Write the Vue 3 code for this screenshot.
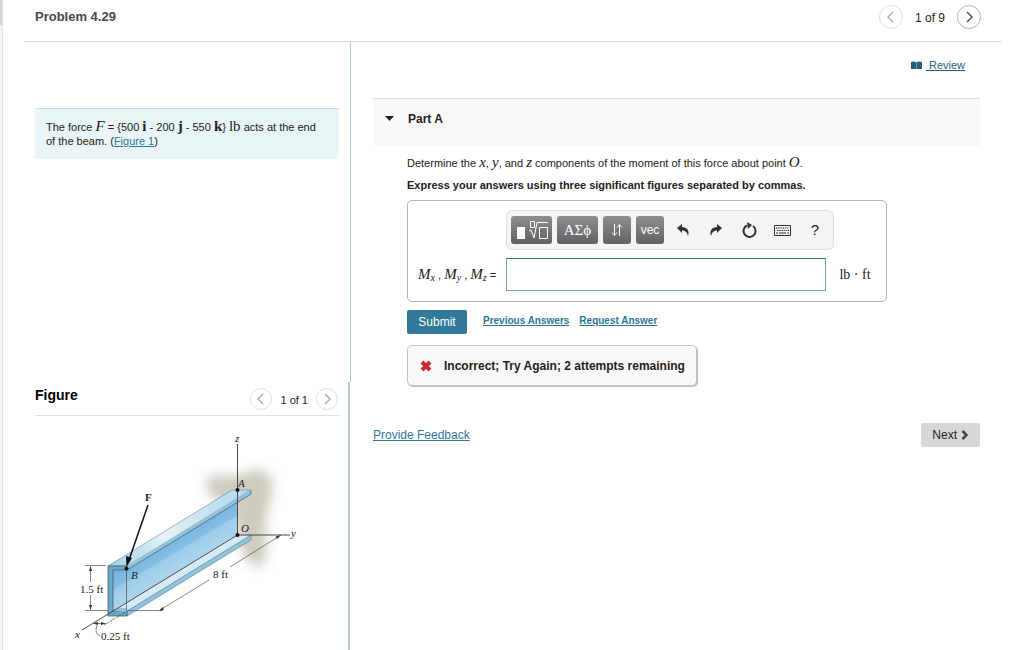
<template>
  <div class="page">
    <div class="edge"></div>
    <div class="shell">
      <header class="top-bar">
        <h1 class="problem-title">Problem 4.29</h1>
        <nav class="pager" aria-label="Problems">
          <button class="pager-button" type="button" aria-label="Previous problem" disabled>
            <svg width="12" height="14" viewBox="0 0 12 14"><path d="M8 2 L3 7 L8 12" /></svg>
          </button>
          <span class="pager-text">1 of 9</span>
          <button class="pager-button" type="button" aria-label="Next problem">
            <svg width="12" height="14" viewBox="0 0 12 14"><path d="M4 2 L9 7 L4 12" /></svg>
          </button>
        </nav>
      </header>

      <div class="columns">
        <!-- Problem statement and figure -->
        <aside class="left">
          <section class="statement-pane">
            <p class="statement">
              The force <i class="math">F</i> = {500 <b class="math">i</b> - 200 <b class="math">j</b> - 550
              <b class="math">k</b>} <span class="math">lb</span> acts at the end of the beam.
              (<a href="#figure">Figure 1</a>)
            </p>
          </section>

          <section id="figure" class="figure-pane">
            <div class="figure-head">
              <h2 class="figure-title">Figure</h2>
              <nav class="pager small" aria-label="Figures">
                <button class="pager-button" type="button" aria-label="Previous figure" disabled>
                  <svg width="12" height="14" viewBox="0 0 12 14"><path d="M8 2 L3 7 L8 12" /></svg>
                </button>
                <span class="pager-text">1 of 1</span>
                <button class="pager-button" type="button" aria-label="Next figure" disabled>
                  <svg width="12" height="14" viewBox="0 0 12 14"><path d="M4 2 L9 7 L4 12" /></svg>
                </button>
              </nav>
            </div>

            <svg class="beam" viewBox="35 416 304 230" role="img" aria-label="Channel beam fixed at A and O">
              <defs>
                <linearGradient id="web" gradientUnits="userSpaceOnUse" x1="160" y1="540" x2="190" y2="590">
                  <stop offset="0" stop-color="#6fb1e0" />
                  <stop offset="0.3" stop-color="#84bee4" />
                  <stop offset="0.34" stop-color="#9dcdea" />
                  <stop offset="1" stop-color="#c0dfee" />
                </linearGradient>
                <linearGradient id="flange" gradientUnits="userSpaceOnUse" x1="110" y1="568" x2="250" y2="490">
                  <stop offset="0" stop-color="#9fcfe6" />
                  <stop offset="0.4" stop-color="#e4f1f9" />
                  <stop offset="0.75" stop-color="#c3e0f1" />
                  <stop offset="1" stop-color="#b4d9ee" />
                </linearGradient>
                <filter id="soft" x="-40%" y="-40%" width="180%" height="180%">
                  <feGaussianBlur stdDeviation="6" />
                </filter>
              </defs>

              <!-- wall behind the fixed end -->
              <path
                d="M206 486 Q206 474 218 475 Q236 478 247 472 Q262 466 270 476 Q275 484 270 502 Q264 522 266 538 Q268 554 263 564 Q255 570 247 560 L240 545 L230 505 L212 498 Z"
                fill="#cfcbbf"
                filter="url(#soft)"
              />

              <!-- web and flanges -->
              <path d="M113 570 L127 570 L237 502 L237 535 L113 611 Z" fill="url(#web)" />
              <path d="M113 611 L237 535 L251 536 L127 612 Z" fill="#d5e9f6" />
              <path d="M127 611 L251 535 L251 540 L127 616 Z" fill="#8fc3dd" stroke="#4c6470" stroke-width="0.5" />
              <path d="M108 566 L232 490 L251 490 L127 566 Z" fill="url(#flange)" stroke="#5e717c" stroke-width="0.5" />
              <path d="M127 566 L251 490 L251 494 L127 570 Z" fill="#8fc3dd" />
              <path d="M127 570 L251 494 L251 490" fill="none" stroke="#4c6470" stroke-width="0.8" />
              <path
                d="M108 566 H127 V570 H113 V611 H127 V616 H108 Z"
                fill="#68a9c7"
                stroke="#46616e"
                stroke-width="0.8"
              />
              <path d="M113 611 L118 608 L127 608 L127 612 Z" fill="#8fc3dd" />

              <!-- axes -->
              <g stroke="#4a4a4a" fill="none" stroke-width="1">
                <path d="M237.5 444 V535" />
                <path d="M237.5 535 H290" />
                <path d="M237.5 535 L82 630" />
                <path d="M126.5 568 V610" stroke-width="0.7" />
              </g>

              <!-- dimension lines -->
              <g stroke="#555" fill="none" stroke-width="0.7">
                <path d="M85 565.5 H106" />
                <path d="M85 610.5 H108" />
                <path d="M90.5 567 V582" />
                <path d="M90.5 595 V609" />
                <path d="M281 535 L230 567" />
                <path d="M209 580 L160 610" />
                <path d="M127 610.5 H163" />
                <path d="M127 611 L104 625" stroke-dasharray="6 1" />
                <path d="M94 623.5 H105" />
                <path d="M97 625 Q94 634 100 636" />
              </g>
              <g fill="#333">
                <path d="M90.5 566 L89 571 H92 Z" />
                <path d="M90.5 610 L89 605 H92 Z" />
                <path d="M281 535 L275.500 536.500 L277 539 Z" />
                <path d="M159 611 L162.500 607 L164 609.500 Z" />
                <path d="M93 623.500 L98 622 V625 Z" />
                <path d="M106 623.500 L101 622 V625 Z" />
              </g>

              <!-- force -->
              <path d="M148 505 L129 560" stroke="#111" stroke-width="1.500" />
              <path d="M126.500 567 L126 556 L132 558 Z" fill="#111" />

              <g fill="#111">
                <circle cx="126.500" cy="568.500" r="2" />
                <circle cx="237.500" cy="490" r="2" />
                <circle cx="237.500" cy="535" r="2" />
              </g>

              <g class="beam-text">
                <text x="235" y="442" class="it">z</text>
                <text x="291" y="537" class="it">y</text>
                <text x="75" y="638" class="it">x</text>
                <text x="238" y="487" class="it">A</text>
                <text x="241" y="532" class="it">O</text>
                <text x="131" y="579" class="it">B</text>
                <text x="145" y="501" class="bold">F</text>
                <text x="80" y="593">1.5 ft</text>
                <text x="213" y="578">8 ft</text>
                <text x="101" y="640">0.25 ft</text>
              </g>
            </svg>
          </section>
        </aside>

        <!-- Answer area -->
        <main class="right">
          <div class="review-row">
            <svg width="11" height="9" viewBox="0 0 11 9">
              <path d="M0 1 Q3 0 5 1 V8 H0 Z M6 1 Q8 0 11 1 V8 H6 Z" fill="#23617a" />
              <path d="M5 1 H6 V8 H5 Z" fill="#6f9bad" />
            </svg>
            <a class="review" href="#review">&nbsp;Review</a>
          </div>

          <button class="part-head" type="button" aria-expanded="true">
            <svg width="9" height="5" viewBox="0 0 9 5"><path d="M0 0 H9 L4.500 5 Z" fill="#222" /></svg>
            <span>Part A</span>
          </button>

          <div class="part-body">
            <p class="question">
              Determine the <i class="math">x</i>, <i class="math">y</i>, and <i class="math">z</i> components of the
              moment of this force about point <i class="math">O</i>.
            </p>
            <p class="instructions">
              Express your answers using three significant figures separated by commas.
            </p>

            <form class="answer" @submit.prevent>
              <div class="toolbar" role="toolbar" aria-label="Equation tools">
                <button class="tool wide" type="button" aria-label="Templates">
                  <svg width="32" height="20" viewBox="0 0 32 20" fill="none" stroke="#fff">
                    <path d="M1 7 H9 V19 H1 Z" fill="#fff" stroke="none" />
                    <path d="M13 11 L15 10 L18 18 L21 2.500 H32" />
                    <path d="M14.500 1.500 H18.500 V7.500 H14.500 Z M23.500 7.500 H31.500 V18.500 H23.500 Z" />
                  </svg>
                </button>
                <button class="tool wide greek" type="button">ΑΣϕ</button>
                <button class="tool" type="button" aria-label="Arrows">
                  <svg width="12" height="14" viewBox="0 0 12 14" fill="none" stroke="#fff">
                    <path d="M3.500 1 V12 M1 9.500 L3.500 12.500 L6 9.500 M8.500 13 V2 M6 4.500 L8.500 1.500 L11 4.500" />
                  </svg>
                </button>
                <button class="tool" type="button">vec</button>
                <button class="plain" type="button" aria-label="Undo">
                  <svg width="14" height="14" viewBox="0 0 14 14">
                    <path d="M1 5 L6 1 V4 C11 4 14 8 12 13 C11 9 9 7.500 6 7.500 V10 Z" fill="#333" />
                  </svg>
                </button>
                <button class="plain" type="button" aria-label="Redo">
                  <svg width="14" height="14" viewBox="0 0 14 14">
                    <path d="M13 5 L8 1 V4 C3 4 0 8 2 13 C3 9 5 7.500 8 7.500 V10 Z" fill="#333" />
                  </svg>
                </button>
                <button class="plain" type="button" aria-label="Reset">
                  <svg width="16" height="16" viewBox="0 0 16 16">
                    <path d="M12 4 A6 6 0 1 1 6 3.500" fill="none" stroke="#333" stroke-width="2" />
                    <path d="M6 0 L11 3 L7 7 Z" fill="#333" />
                  </svg>
                </button>
                <button class="plain" type="button" aria-label="Keyboard shortcuts">
                  <svg width="17" height="11" viewBox="0 0 17 11" fill="none" stroke="#333">
                    <path d="M0.500 0.500 H16.500 V10.500 H0.500 Z" />
                    <path d="M2 3 H15 M3 5.500 H15" stroke-dasharray="1.500 0.700" />
                    <path d="M2 8 H4 M5 8 H12 M13 8 H15" />
                  </svg>
                </button>
                <button class="plain help" type="button" aria-label="Help">?</button>
              </div>
              <label class="answer-label" for="moment">
                <i class="math">M<sub>x</sub></i> , <i class="math">M<sub>y</sub></i> ,
                <i class="math">M<sub>z</sub></i> =
              </label>
              <input id="moment" v-model="answer" class="answer-input" type="text" autocomplete="off" />
              <span class="unit">lb · ft</span>
            </form>

            <div class="actions">
              <button class="submit" type="button">Submit</button>
              <a href="#previous">Previous Answers</a>
              <a href="#request">Request Answer</a>
            </div>

            <div class="feedback" role="status">
              <svg width="12" height="12" viewBox="0 0 12 12">
                <path d="M2 2 L10 10 M10 2 L2 10" stroke="#d0282e" stroke-width="4" />
              </svg>
              <span>Incorrect; Try Again; 2 attempts remaining</span>
            </div>
          </div>

          <footer class="bottom">
            <a href="#feedback">Provide Feedback</a>
            <button class="next" type="button">
              Next
              <svg width="8" height="10" viewBox="0 0 8 10">
                <path d="M1.500 1 L5.500 5 L1.500 9" fill="none" stroke="#444" stroke-width="2.500" />
              </svg>
            </button>
          </footer>
        </main>
      </div>
    </div>
  </div>
</template>

<script setup>
import { ref } from 'vue';

const answer = ref('');
</script>

<style>
body {
  margin: 0;
  background: #fff;
}
</style>

<style scoped>
* {
  box-sizing: border-box;
}

.page {
  display: flex;
  min-height: 100vh;
  font-family: 'Liberation Sans', Arial, sans-serif;
  font-size: 11px;
  line-height: 14px;
  color: #222;
}

h1,
h2,
p {
  margin: 0;
}

button {
  padding: 0;
  border: 0;
  background: none;
  color: inherit;
  font: inherit;
}

svg {
  flex: none;
}

a {
  color: #2f7896;
}

.math {
  font-family: 'Liberation Serif', 'Times New Roman', serif;
  font-size: 15px;
  line-height: 10px;
}

.edge {
  width: 3px;
  border-right: 1px solid #e2e2e2;
  background: linear-gradient(#d6d6d6 25px, #f3f3f3 25px);
}

.shell {
  flex: 1;
  display: flex;
  flex-direction: column;
  min-width: 0;
  padding: 0 22px 0 21px;
}

.top-bar {
  display: flex;
  justify-content: space-between;
  align-items: center;
  padding: 5px 21px 12px 11px;
  border-bottom: 1px solid #dcdcdc;
}

.problem-title {
  font-size: 13px;
  color: #484848;
}

.pager {
  display: flex;
  align-items: center;
  gap: 12px;
  font-size: 12px;
}

.pager-text {
  padding-top: 2px;
}

.pager-button {
  display: flex;
  align-items: center;
  justify-content: center;
  width: 24px;
  height: 24px;
  border: 1px solid #b5b5b5;
  border-radius: 50%;
}

.pager-button path {
  fill: none;
  stroke: #555;
  stroke-width: 1.5;
}

.pager-button:disabled {
  border-color: #dedede;
}

.pager-button:disabled path {
  stroke: #b0b0b0;
}

.small {
  gap: 8px;
  font-size: 11px;
}

.small .pager-button {
  width: 22px;
  height: 22px;
}

.columns {
  flex: 1;
  display: flex;
}

.left {
  flex: none;
  display: flex;
  flex-direction: column;
  width: 327px;
}

.statement-pane {
  min-height: 340px;
  padding: 66px 11px 0;
  border-right: 1px solid #b9cbdb;
}

.statement {
  padding: 11px 14px 11px 11px;
  border-top: 1px solid #d5dbdb;
  background: #eaf5f7;
}

.figure-pane {
  flex: 1;
  margin-right: 1px;
  padding: 6px 9px 0 11px;
  border-right: 2px solid #bccbdc;
}

.figure-head {
  display: flex;
  justify-content: space-between;
  align-items: flex-start;
  padding: 0 1px 5px 0;
  border-bottom: 1px solid #e0e0e0;
}

.figure-title {
  font-size: 14px;
  line-height: 14px;
  color: #000;
}

.beam {
  display: block;
  width: 100%;
}

.beam-text {
  font-family: 'Liberation Serif', 'Times New Roman', serif;
  font-size: 11px;
  fill: #222;
}

.it {
  font-style: italic;
}

.bold {
  font-weight: bold;
}

.right {
  flex: 1;
  min-width: 0;
  padding: 16px 22px 0;
}

.review-row {
  display: flex;
  align-items: center;
  justify-content: flex-end;
  gap: 4px;
  padding-right: 15px;
}

.review {
  color: #23617a;
}

.part-head {
  display: flex;
  align-items: center;
  gap: 14px;
  width: 100%;
  height: 48px;
  margin-top: 26px;
  padding: 0 12px 8px;
  border-top: 1px solid #dcdcdc;
  background: #f9f9f9;
  font-size: 12px;
  font-weight: bold;
}

.part-body {
  padding: 10px 34px 0;
}

.instructions {
  margin-top: 8px;
  font-weight: bold;
}

.answer {
  display: grid;
  grid-template-columns: 88px minmax(0, 1fr) 58px;
  align-items: center;
  row-gap: 8px;
  max-width: 480px;
  margin-top: 8px;
  padding: 9px 2px 10px 10px;
  border: 1px solid #b5b5b5;
  border-radius: 5px;
}

.toolbar {
  grid-column: 2 / 4;
  justify-self: start;
  display: flex;
  align-items: center;
  gap: 5px;
  padding: 5px 4px;
  border: 1px solid #dedede;
  border-radius: 6px;
  background: #f4f4f4;
}

.tool {
  display: flex;
  align-items: center;
  justify-content: center;
  width: 28px;
  height: 28px;
  border-radius: 3px;
  background: linear-gradient(#8e8e93, #626262);
  color: #fff;
  font-size: 12px;
}

.wide {
  width: 41px;
}

.greek {
  font-family: 'Liberation Serif', 'Times New Roman', serif;
  font-size: 15px;
}

.plain {
  display: flex;
  align-items: center;
  justify-content: center;
  width: 28px;
  height: 28px;
}

.help {
  font-size: 15px;
}

.answer-label {
  white-space: nowrap;
}

.answer-label sub {
  font-size: 10px;
  line-height: 1px;
  vertical-align: -2px;
}

.answer-input {
  width: 100%;
  height: 33px;
  padding: 0 8px;
  border: 1px solid #6fa3bb;
  border-top-color: #2f7896;
  border-radius: 0;
  outline: none;
  font: inherit;
  font-size: 14px;
}

.unit {
  justify-self: center;
  font-family: 'Liberation Serif', 'Times New Roman', serif;
  font-size: 14px;
}

.actions {
  display: flex;
  align-items: center;
  gap: 10px;
  margin-top: 8px;
  font-size: 10px;
  font-weight: bold;
}

.actions a {
  padding-bottom: 2px;
}

.submit {
  width: 60px;
  height: 24px;
  margin-right: 6px;
  border-radius: 2px;
  background: #31799a;
  color: #fff;
  font-size: 12px;
  font-weight: normal;
}

.feedback {
  display: inline-flex;
  align-items: center;
  gap: 12px;
  margin-top: 11px;
  padding: 13px 11px 12px 12px;
  border: 1px solid #c2c2c2;
  border-radius: 5px;
  background: #f9f9f9;
  box-shadow: 1px 1px 1px #bbb;
  font-size: 12px;
  font-weight: bold;
}

.bottom {
  display: flex;
  align-items: center;
  justify-content: space-between;
  margin-top: 37px;
  font-size: 12px;
}

.next {
  display: flex;
  align-items: center;
  gap: 4px;
  padding: 5px 11px;
  border-radius: 2px;
  background: #d8d8d8;
}
</style>
